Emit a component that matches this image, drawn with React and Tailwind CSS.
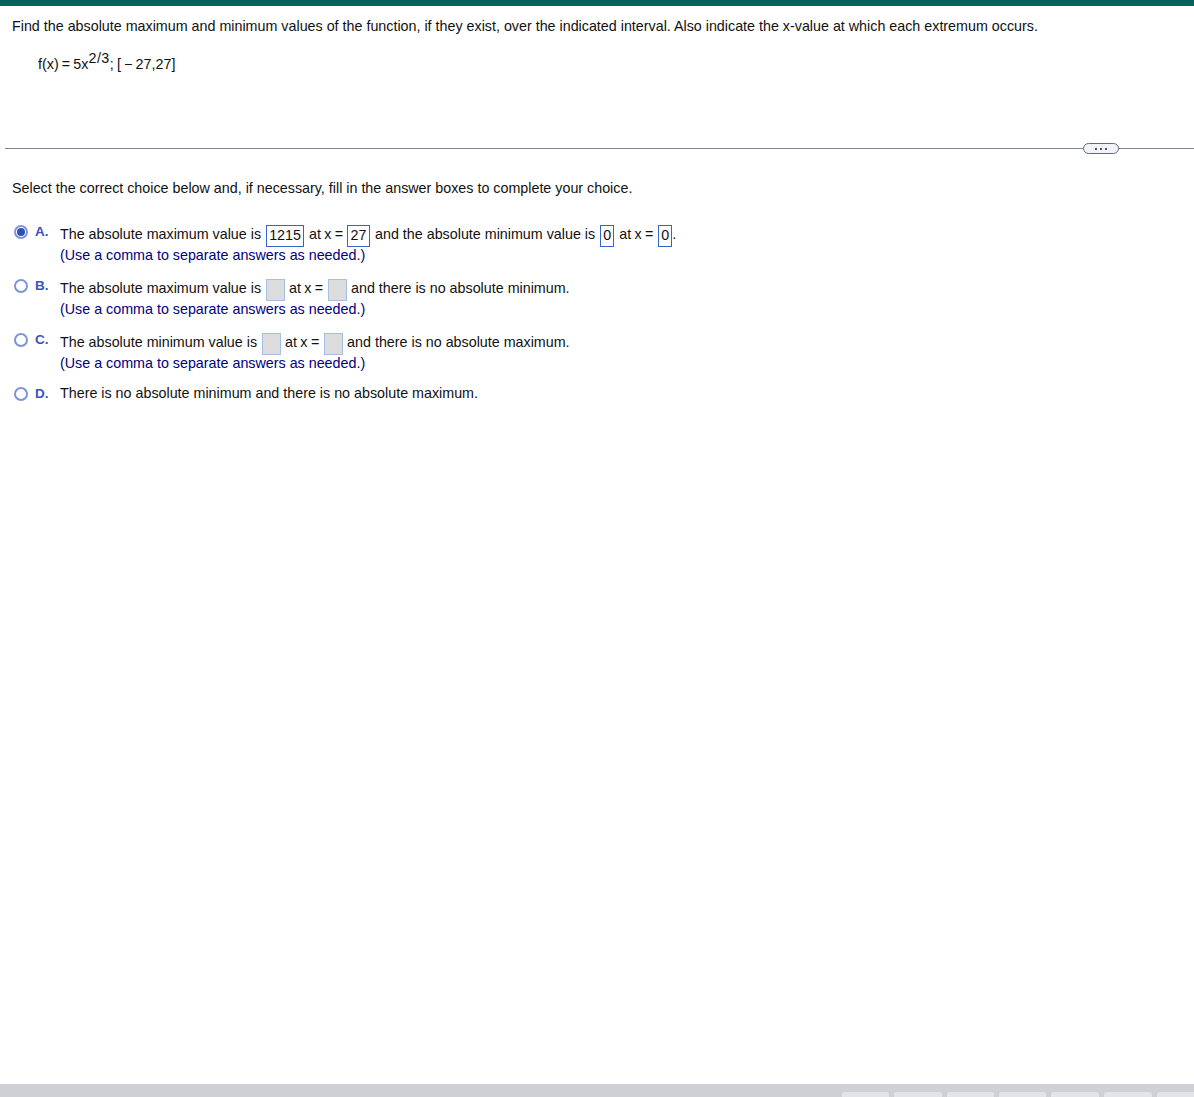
import React from "react";

const font = { fontFamily: '"Liberation Sans", Arial, sans-serif' };

function Filled({ value, className = "" }) {
  return (
    <span className={`inline-flex h-[22px] translate-y-[1px] items-center justify-center border border-[#3366cc] bg-white ${className}`}>
      {value}
    </span>
  );
}

function Empty() {
  return <span className="inline-block h-[22px] w-[19px] translate-y-[1px] border border-[#a6bde6] bg-[#dcdcdc]" />;
}

function AtX({ className = "ml-[5px]" }) {
  return <span className={`w-[39px] [word-spacing:-0.6px] ${className}`}>at x =</span>;
}

function Radio({ selected }) {
  return (
    <span className="flex h-[14px] w-[14px] items-center justify-center rounded-full border-2 border-[#7d95d6] bg-white">
      {selected && <span className="h-[8px] w-[8px] rounded-full bg-[#2f4fb5]" />}
    </span>
  );
}

function Choice({ letter, selected, note, className = "", radioClass = "pt-[2px]", children }) {
  return (
    <div className={`flex ${className}`}>
      <div className={`flex w-[60px] items-start pl-[14px] ${radioClass}`}>
        <Radio selected={selected} />
        <span className="ml-[7px] mt-[-2px] text-[13.5px] font-bold leading-[18px] text-[#3a52c4]">{letter}</span>
      </div>
      <div>
        <div className="flex h-[24px] items-center whitespace-pre">{children}</div>
        {note && <div className="mt-[-2px] h-[21px] leading-[21px] text-[#000080]">(Use a comma to separate answers as needed.)</div>}
      </div>
    </div>
  );
}

export default function App() {
  return (
    <div className="flex h-[1097px] flex-col overflow-hidden bg-white text-[14.3px] text-[#111]" style={font}>
      <div className="h-[6px] bg-[#05635c]" />

      <div className="pl-[12px] pt-[11px] leading-[18px]">
        Find the absolute maximum and minimum values of the function, if they exist, over the indicated interval. Also indicate the x-value at which each extremum occurs.
      </div>

      <div className="flex h-[39px] items-end pl-[38px] text-[14.3px] leading-[18px] [word-spacing:-0.8px]">
        <span className="mb-[1px]">f(x) = 5x</span>
        <span className="mb-[7px] tracking-[0.5px]">2/3</span>
        <span className="mb-[1px]">; [ − 27,27]</span>
      </div>

      <div className="relative ml-[5px] mt-[74px] h-px bg-[#7c8598]">
        <span className="absolute left-[1078px] top-[-5px] flex h-[11px] w-[36px] items-center justify-center gap-[3px] rounded-full border border-[#5f6b80] bg-[#f1f3f6]">
          <i className="h-[2px] w-[2px] bg-[#4a5568]" />
          <i className="h-[2px] w-[2px] bg-[#4a5568]" />
          <i className="h-[2px] w-[2px] bg-[#4a5568]" />
        </span>
      </div>

      <div className="pl-[12px] pt-[30px] leading-[18px]">
        Select the correct choice below and, if necessary, fill in the answer boxes to complete your choice.
      </div>

      <Choice letter="A." selected note className="mt-[26px]">
        <span>The absolute maximum value is</span>
        <Filled value="1215" className="ml-[5px] w-[38px]" />
        <AtX />
        <Filled value="27" className="ml-[-1px] w-[23px]" />
        <span className="ml-[5px]">and the absolute minimum value is</span>
        <Filled value="0" className="ml-[5px] w-[14px]" />
        <AtX />
        <Filled value="0" className="w-[14px]" />
        <span>.</span>
      </Choice>

      <Choice letter="B." note className="mt-[11px]">
        <span>The absolute maximum value is</span>
        <span className="ml-[5px] flex"><Empty /></span>
        <AtX className="ml-[4px]" />
        <Empty />
        <span className="ml-[4px]">and there is no absolute minimum.</span>
      </Choice>

      <Choice letter="C." note className="mt-[11px]">
        <span>The absolute minimum value is</span>
        <span className="ml-[5px] flex"><Empty /></span>
        <AtX className="ml-[4px]" />
        <Empty />
        <span className="ml-[4px]">and there is no absolute maximum.</span>
      </Choice>

      <Choice letter="D." radioClass="pt-[5px]" className="mt-[8px]">
        <span>There is no absolute minimum and there is no absolute maximum.</span>
      </Choice>

      <div className="mt-auto flex h-[13px] justify-end gap-[5px] overflow-hidden bg-[#cfd0d5] pt-[8px]">
        {[47, 48, 47, 47, 48, 48, 48].map((w, i) => (
          <span key={i} style={{ width: w }} className="h-[8px] shrink-0 rounded-t-[3px] bg-[#e3e4e7] last:mr-[-11px]" />
        ))}
      </div>
    </div>
  );
}
